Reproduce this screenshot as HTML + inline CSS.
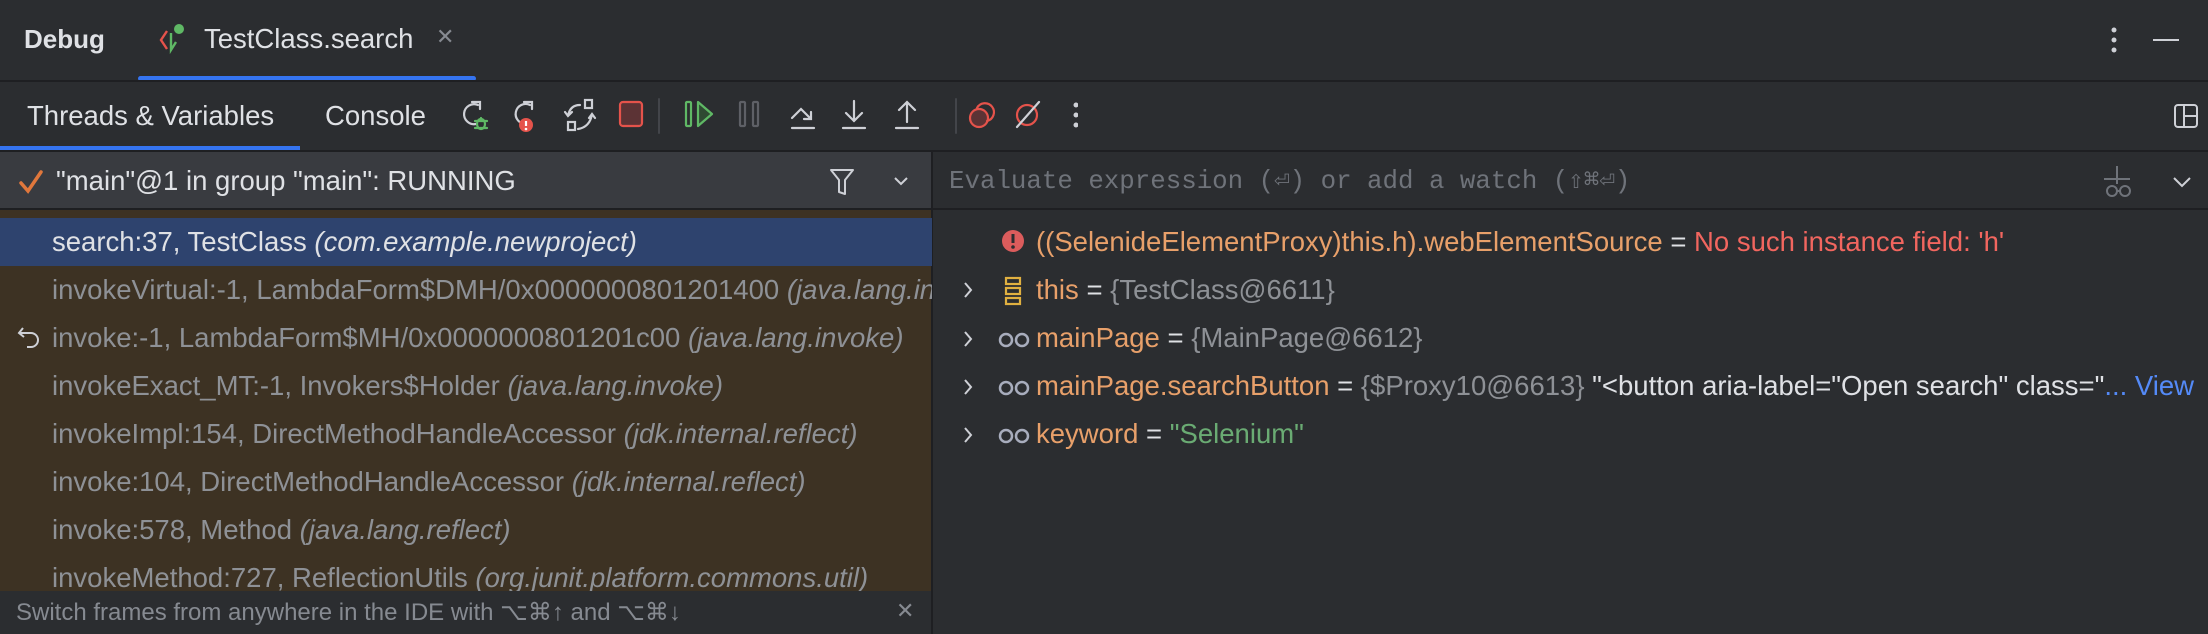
<!DOCTYPE html>
<html><head><meta charset="utf-8"><style>
*{margin:0;padding:0;box-sizing:border-box}
body{width:2208px;height:634px;background:#2b2d30;overflow:hidden;position:relative;font-family:"Liberation Sans",sans-serif;font-size:27.5px;color:#dfe1e5}
.a{position:absolute;white-space:nowrap}
.line{position:absolute;background:#1e1f22}
.ic{position:absolute}
.fr{position:absolute;left:0;width:932px;height:48px;line-height:48px;padding-left:52px;color:#8e9196;white-space:nowrap;overflow:hidden}
.fr i{font-style:italic}
.vr{position:absolute;left:1036px;height:48px;line-height:48px;white-space:nowrap}
.or{color:#e8a06a}.gr{color:#8e9196}.rd{color:#f2665f}.gn{color:#6aab73}.bl{color:#548af7}.wh{color:#dfe1e5}
.chev{position:absolute;left:962px}
</style></head><body>
<!-- top tab bar -->
<div class="a" style="left:24px;top:24px;font-weight:bold;font-size:26px">Debug</div>
<svg class="ic" style="left:158px;top:22px" width="30" height="34" viewBox="0 0 30 34"><path d="M9 9 L3 18 L9 27" fill="none" stroke="#e5534b" stroke-width="2.4"/><path d="M13 11 L13 28 L18 20" fill="none" stroke="#5fb865" stroke-width="2.4"/><circle cx="21" cy="7" r="5" fill="#5fb865"/></svg>
<div class="a" style="left:204px;top:23px">TestClass.search</div>
<div class="a" style="left:436px;top:24px;color:#868a91;font-size:22px">✕</div>
<div class="a" style="left:138px;top:76px;width:338px;height:5px;background:#3574f0;border-radius:3px"></div>
<svg class="ic" style="left:2106px;top:26px" width="16" height="28"><circle cx="8" cy="4" r="2.5" fill="#ced0d6"/><circle cx="8" cy="14" r="2.5" fill="#ced0d6"/><circle cx="8" cy="24" r="2.5" fill="#ced0d6"/></svg>
<div class="a" style="left:2153px;top:39px;width:26px;height:2px;background:#ced0d6"></div>
<div class="line" style="left:0;top:80px;width:2208px;height:2px"></div>
<!-- toolbar -->
<div class="a" style="left:27px;top:100px">Threads &amp; Variables</div>
<div class="a" style="left:325px;top:100px">Console</div>
<div class="a" style="left:0;top:146px;width:300px;height:5px;background:#3574f0"></div>
<svg class="ic" style="left:458px;top:96px" width="620" height="38" viewBox="0 0 620 36">
 <g fill="none" stroke-width="2.2" stroke-linecap="round">
 <path d="M20 8 A10 10 0 1 0 18 27" stroke="#ced0d6"/><path d="M14 5 H22 V12" stroke="#ced0d6"/>
 <ellipse cx="23" cy="27" rx="4" ry="5" stroke="#5fb865"/><path d="M17 24 H29 M17 31 H29 M23 21 V22" stroke="#5fb865"/>
 <path d="M72 8 A10 10 0 1 0 68 27" stroke="#ced0d6"/><path d="M66 5 H74 V12" stroke="#ced0d6"/>
 <rect x="110" y="25" width="7" height="8" stroke="#ced0d6"/><rect x="127" y="3" width="7" height="8" stroke="#ced0d6"/>
 <path d="M122 8 Q112 8 110 19 M107 15 L110 19 L114 15" stroke="#ced0d6"/><path d="M120 32 Q132 30 134 17 M131 21 L134 17 L137 21" stroke="#ced0d6"/>
 <rect x="162" y="5" width="22" height="24" rx="3" fill="#5c3335" stroke="#e5534b"/>
 <path d="M201 2 V36" stroke="#43454a" stroke-width="2"/>
 <rect x="228" y="5" width="5" height="24" rx="1" stroke="#5fb865"/><path d="M240 5 L254 17 L240 29 Z" stroke="#5fb865" fill="#2f4a32" stroke-linejoin="round"/>
 <rect x="282" y="5" width="5" height="24" rx="1" stroke="#5e6066"/><rect x="295" y="5" width="5" height="24" rx="1" stroke="#5e6066"/>
 <path d="M334 31 H356" stroke="#ced0d6"/><path d="M334 21 L343 12 L352 21 M346 15 L353 22 M353 15 V22 H346" stroke="#ced0d6"/>
 <path d="M385 31 H407 M396 4 V24 M388 16 L396 24 L404 16" stroke="#ced0d6"/>
 <path d="M438 31 H460 M449 5 V25 M441 13 L449 5 L457 13" stroke="#ced0d6"/>
 <path d="M498 2 V36" stroke="#43454a" stroke-width="2"/>
 <circle cx="521" cy="21" r="9" fill="#5c3335" stroke="#e5534b"/><path d="M519 11 A9 9 0 1 1 529 24" stroke="#e5534b"/>
 <circle cx="569" cy="18" r="10" stroke="#e5534b"/><path d="M559 30 L581 5" stroke="#ced0d6"/>
 </g>
 <circle cx="68" cy="28" r="7" fill="#e5534b"/><path d="M68 24 V29" stroke="#fff" stroke-width="2.2"/><circle cx="68" cy="32" r="1.3" fill="#fff"/>
 <circle cx="618" cy="8" r="2.5" fill="#ced0d6"/><circle cx="618" cy="18" r="2.5" fill="#ced0d6"/><circle cx="618" cy="28" r="2.5" fill="#ced0d6"/>
</svg>
<svg class="ic" style="left:2174px;top:104px" width="24" height="24"><rect x="1" y="1" width="22" height="22" rx="3" fill="none" stroke="#ced0d6" stroke-width="2"/><path d="M10 1 V23 M10 12 H23" stroke="#ced0d6" stroke-width="2"/></svg>
<div class="line" style="left:0;top:150px;width:2208px;height:2px"></div>
<!-- left thread header -->
<div class="a" style="left:0;top:152px;width:931px;height:57px;background:#393b40"></div>
<svg class="ic" style="left:18px;top:169px" width="26" height="26"><path d="M3 14 L10 22 L23 3" fill="none" stroke="#e0773c" stroke-width="3.5" stroke-linecap="round"/></svg>
<div class="a" style="left:56px;top:165px">"main"@1 in group "main": RUNNING</div>
<svg class="ic" style="left:829px;top:168px" width="26" height="28"><path d="M2 2 H24 L16 12 V26 L10 24 V12 Z" fill="none" stroke="#ced0d6" stroke-width="2" stroke-linejoin="round"/></svg>
<svg class="ic" style="left:893px;top:175px" width="16" height="12"><path d="M2 3 L8 9 L14 3" fill="none" stroke="#ced0d6" stroke-width="2"/></svg>
<div class="line" style="left:931px;top:152px;width:2px;height:482px"></div>
<!-- eval -->
<div class="a" style="left:949px;top:165px;font-family:'Liberation Mono',monospace;font-size:25.8px;color:#6f737a">Evaluate expression (⏎) or add a watch (⇧⌘⏎)</div>
<svg class="ic" style="left:2102px;top:166px" width="32" height="32"><path d="M2 13 H28 M15 0 V18" stroke="#6f737a" stroke-width="2"/><circle cx="10" cy="25" r="5" fill="none" stroke="#6f737a" stroke-width="2"/><circle cx="23" cy="25" r="5" fill="none" stroke="#6f737a" stroke-width="2"/><path d="M15 25 H18" stroke="#6f737a" stroke-width="2"/></svg>
<svg class="ic" style="left:2172px;top:176px" width="20" height="12"><path d="M2 2 L10 10 L18 2" fill="none" stroke="#ced0d6" stroke-width="2"/></svg>
<div class="line" style="left:0;top:208px;width:2208px;height:2px"></div>
<!-- frames -->
<div class="a" style="left:0;top:210px;width:931px;height:381px;background:#3d3223"></div>
<div class="fr" style="top:218px;background:#2e436e;color:#dfe1e5">search:37, TestClass <i>(com.example.newproject)</i></div>
<div class="fr" style="top:266px">invokeVirtual:-1, LambdaForm$DMH/0x0000000801201400 <i>(java.lang.invoke)</i></div>
<div class="fr" style="top:314px">invoke:-1, LambdaForm$MH/0x0000000801201c00 <i>(java.lang.invoke)</i></div>
<svg class="ic" style="left:17px;top:326px" width="26" height="26"><path d="M6 2 L2 7 L7 11 M3 7 H14 A7 7 0 0 1 14 21 H10" fill="none" stroke="#ced0d6" stroke-width="2"/></svg>
<div class="fr" style="top:362px">invokeExact_MT:-1, Invokers$Holder <i>(java.lang.invoke)</i></div>
<div class="fr" style="top:410px">invokeImpl:154, DirectMethodHandleAccessor <i>(jdk.internal.reflect)</i></div>
<div class="fr" style="top:458px">invoke:104, DirectMethodHandleAccessor <i>(jdk.internal.reflect)</i></div>
<div class="fr" style="top:506px">invoke:578, Method <i>(java.lang.reflect)</i></div>
<div class="fr" style="top:554px;height:37px">invokeMethod:727, ReflectionUtils <i>(org.junit.platform.commons.util)</i></div>
<div class="a" style="left:0;top:591px;width:931px;height:43px;background:#2b2d30"></div>
<div class="a" style="left:16px;top:598px;font-size:24px;color:#868a91">Switch frames from anywhere in the IDE with ⌥⌘↑ and ⌥⌘↓</div>
<div class="a" style="left:896px;top:598px;font-size:22px;color:#868a91">✕</div>
<!-- variables -->
<svg class="ic" style="left:1001px;top:229px" width="24" height="24"><circle cx="12" cy="12" r="11" fill="#db5c5c"/><path d="M12 5 V14" stroke="#2b2d30" stroke-width="3"/><circle cx="12" cy="18" r="1.8" fill="#2b2d30"/></svg>
<div class="vr" style="top:218px"><span class="or">((SelenideElementProxy)this.h).webElementSource</span> <span class="wh">=</span> <span class="rd">No such instance field: 'h'</span></div>
<svg class="chev" style="top:280px" width="12" height="20"><path d="M3 3 L9 10 L3 17" fill="none" stroke="#ced0d6" stroke-width="2"/></svg>
<svg class="ic" style="left:1003px;top:276px" width="20" height="30"><g fill="none" stroke="#e0b040" stroke-width="2.2"><rect x="3" y="2" width="14" height="6"/><rect x="3" y="12" width="14" height="6"/><rect x="3" y="22" width="14" height="6"/></g></svg>
<div class="vr" style="top:266px"><span class="or">this</span> <span class="wh">=</span> <span class="gr">{TestClass@6611}</span></div>
<svg class="chev" style="top:329px" width="12" height="20"><path d="M3 3 L9 10 L3 17" fill="none" stroke="#ced0d6" stroke-width="2"/></svg>
<svg class="ic" style="left:998px;top:331px" width="34" height="18"><g fill="none" stroke="#a8adbd" stroke-width="2.5"><circle cx="8" cy="9" r="6"/><circle cx="24" cy="9" r="6"/></g></svg>
<div class="vr" style="top:314px"><span class="or">mainPage</span> <span class="wh">=</span> <span class="gr">{MainPage@6612}</span></div>
<svg class="chev" style="top:377px" width="12" height="20"><path d="M3 3 L9 10 L3 17" fill="none" stroke="#ced0d6" stroke-width="2"/></svg>
<svg class="ic" style="left:998px;top:379px" width="34" height="18"><g fill="none" stroke="#a8adbd" stroke-width="2.5"><circle cx="8" cy="9" r="6"/><circle cx="24" cy="9" r="6"/></g></svg>
<div class="vr" style="top:362px"><span class="or">mainPage.searchButton</span> <span class="wh">=</span> <span class="gr">{$Proxy10@6613}</span> <span class="wh">"&lt;button aria-label="Open search" class="</span><span class="bl">... View</span></div>
<svg class="chev" style="top:425px" width="12" height="20"><path d="M3 3 L9 10 L3 17" fill="none" stroke="#ced0d6" stroke-width="2"/></svg>
<svg class="ic" style="left:998px;top:427px" width="34" height="18"><g fill="none" stroke="#a8adbd" stroke-width="2.5"><circle cx="8" cy="9" r="6"/><circle cx="24" cy="9" r="6"/></g></svg>
<div class="vr" style="top:410px"><span class="or">keyword</span> <span class="wh">=</span> <span class="gn">"Selenium"</span></div>
</body></html>
